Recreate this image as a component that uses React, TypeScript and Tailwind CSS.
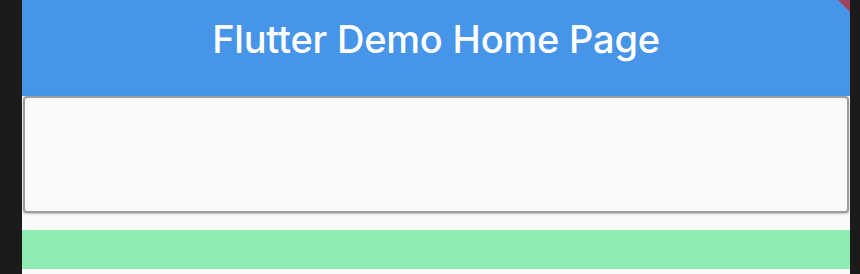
export default function App() {
  return (
    <div className="flex h-[274px] w-[860px] overflow-hidden bg-[#1b1b1b]">
      <div className="w-[22px] shrink-0" />
      <div className="relative flex w-[828px] flex-col overflow-hidden bg-[#fafafa]">
        {/* app bar */}
        <div className="flex h-[96px] justify-center bg-[#4795e9] pt-[15px]">
          <h1
            className="text-[38px] leading-[48px] font-medium tracking-[-0.2px] text-white"
            style={{ fontFamily: 'Inter, "Liberation Sans", sans-serif' }}
          >
            Flutter Demo Home Page
          </h1>
        </div>

        {/* text field card */}
        <div className="mx-[1px] h-[117px] rounded-[4px] border-2 border-[#9c9c9c] bg-[#fafafa] shadow-[0_1px_2px_rgba(0,0,0,0.25)]" />

        <div className="mt-[17px] h-[39px] bg-[#8eebb1]" />

        {/* debug banner corner */}
        <div className="absolute right-[-10px] top-[-10px] h-[14px] w-[30px] rotate-45 bg-[#a3425b]" />
      </div>
      <div className="w-[10px] shrink-0" />
    </div>
  );
}
